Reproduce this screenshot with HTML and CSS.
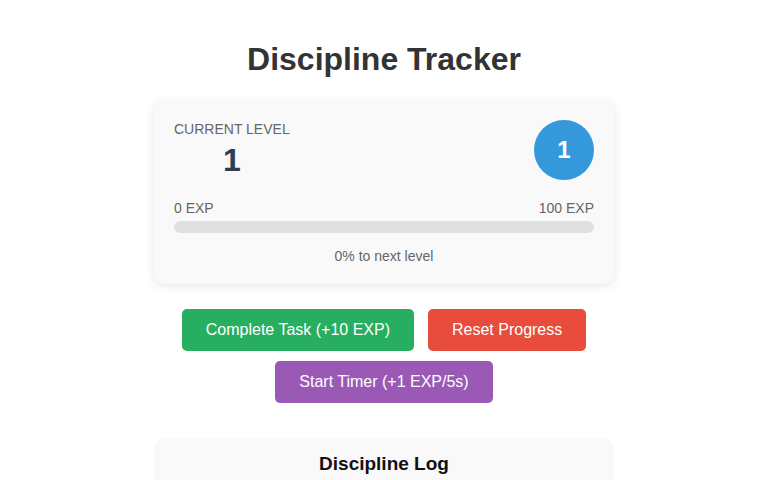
FILE: index.html
```html
<!DOCTYPE html>
<html lang="en">

<head>
    <meta charset="UTF-8">
    <meta name="viewport" content="width=device-width, initial-scale=1.0">
    <title>Discipline Tracker</title>
    <link rel="stylesheet" href="styles.css">
</head>

<body>
    <div class="container">
        <h1>Discipline Tracker</h1>

        <div class="level-card">
            <div class="level-head">
                <div class="level-info">
                    <div class="level-label">CURRENT LEVEL</div>
                    <div class="level-num">1</div>
                </div>
                <div class="level-badge">1</div>
            </div>
            <div class="exp-labels">
                <span>0 EXP</span>
                <span>100 EXP</span>
            </div>
            <div class="progress">
                <div class="progress-fill" style="width: 0%"></div>
            </div>
            <div class="progress-text">0% to next level</div>
        </div>

        <div class="controls">
            <button class="btn btn-task">Complete Task (+10 EXP)</button>
            <button class="btn btn-reset">Reset Progress</button>
            <button class="btn btn-timer">Start Timer (+1 EXP/5s)</button>
        </div>

        <div class="log">
            <h3>Discipline Log</h3>
            <div class="log-list"></div>
        </div>
    </div>
</body>

</html>
```

FILE: styles.css
```css
* {
    box-sizing: border-box;
}

body {
    margin: 0;
    padding: 20px;
    font-family: "Liberation Sans", Arial, sans-serif;
    background: #fff;
    color: #111;
}

.container {
    max-width: 460px;
    margin: 0 auto;
}

h1 {
    text-align: center;
    color: #333;
    font-size: 32px;
    margin: 21px 0 22px;
}

.level-card {
    background: #f9f9f9;
    border-radius: 10px;
    padding: 20px;
    box-shadow: 0 2px 10px rgba(0, 0, 0, 0.1);
}

.level-head {
    display: flex;
    justify-content: space-between;
    align-items: center;
    margin-bottom: 20px;
}

.level-info {
    text-align: center;
}

.level-label {
    font-size: 14px;
    color: #666;
}

.level-num {
    font-size: 32px;
    font-weight: bold;
    color: #2c3e50;
    margin-top: 5px;
}

.level-badge {
    width: 60px;
    height: 60px;
    border-radius: 50%;
    background: #3498db;
    color: #fff;
    font-size: 24px;
    font-weight: bold;
    display: flex;
    align-items: center;
    justify-content: center;
}

.exp-labels {
    display: flex;
    justify-content: space-between;
    font-size: 14px;
    color: #666;
    margin-bottom: 5px;
}

.progress {
    height: 12px;
    background: #e0e0e0;
    border-radius: 6px;
    overflow: hidden;
}

.progress-fill {
    height: 100%;
    background: #2ecc71;
}

.progress-text {
    text-align: center;
    font-size: 14px;
    color: #666;
    margin-top: 15px;
}

.controls {
    display: flex;
    flex-wrap: wrap;
    justify-content: center;
    gap: 10px 14px;
    margin: 25px 0 35px;
}

.btn {
    border: none;
    border-radius: 5px;
    padding: 12px 24px;
    font-family: inherit;
    font-size: 16px;
    color: #fff;
    cursor: pointer;
}

.btn-task {
    background: #27ae60;
}

.btn-reset {
    background: #e74c3c;
}

.btn-timer {
    background: #9b59b6;
}

.log {
    background: #f9f9f9;
    border-radius: 10px;
    padding: 15px 20px 20px;
}

.log h3 {
    text-align: center;
    margin: 0;
    font-size: 19px;
}
```
